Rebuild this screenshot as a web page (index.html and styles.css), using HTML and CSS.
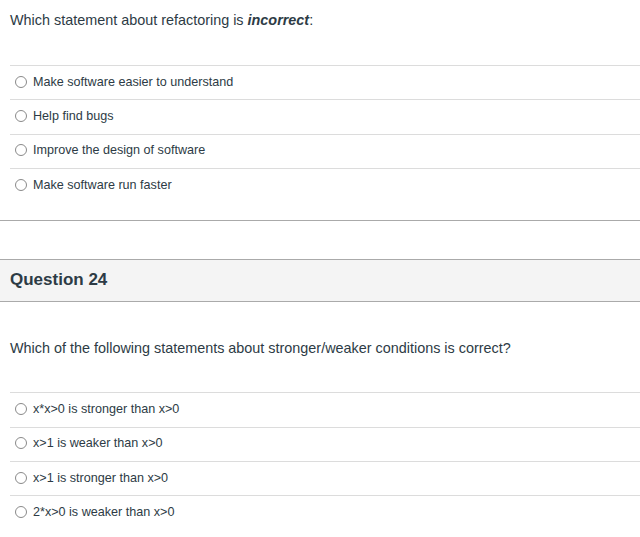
FILE: index.html
```html
<!DOCTYPE html>
<html>
<head>
<meta charset="utf-8">
<link rel="stylesheet" href="styles.css">
</head>
<body>
<div class="question">
  <div class="q-text">Which statement about refactoring is <b><i>incorrect</i></b>:</div>
  <div class="answers">
    <div class="answer"><span class="radio"></span><span>Make software easier to understand</span></div>
    <div class="answer"><span class="radio"></span><span>Help find bugs</span></div>
    <div class="answer"><span class="radio"></span><span>Improve the design of software</span></div>
    <div class="answer"><span class="radio"></span><span>Make software run faster</span></div>
  </div>
</div>
<div class="question q2">
  <div class="q-header">Question 24</div>
  <div class="q-text q-text2">Which of the following statements about stronger/weaker conditions is correct?</div>
  <div class="answers">
    <div class="answer"><span class="radio"></span><span>x*x&gt;0 is stronger than x&gt;0</span></div>
    <div class="answer"><span class="radio"></span><span>x&gt;1 is weaker than x&gt;0</span></div>
    <div class="answer"><span class="radio"></span><span>x&gt;1 is stronger than x&gt;0</span></div>
    <div class="answer"><span class="radio"></span><span>2*x&gt;0 is weaker than x&gt;0</span></div>
  </div>
</div>
</body>
</html>
```
FILE: styles.css
```css
html, body {
  margin: 0;
  padding: 0;
  background: #fff;
}
body {
  font-family: "Liberation Sans", Arial, sans-serif;
  color: #2d3b45;
  width: 640px;
  overflow: hidden;
}
.question {
  border-bottom: 1px solid #aaaaaa;
  padding-bottom: 18px;
}
.q-text {
  font-size: 14.4px;
  line-height: 20px;
  padding: 10px 0 0 10px;
  height: 65px;
  box-sizing: border-box;
}
.answers {
  margin-left: 10px;
}
.answer {
  display: flex;
  align-items: center;
  height: 34.33px;
  box-sizing: border-box;
  border-top: 1px solid #dcdcdc;
  font-size: 12.6px;
  padding-left: 5px;
  padding-bottom: 2px;
}
.radio {
  width: 12px;
  height: 12px;
  box-sizing: border-box;
  border: 1px solid #8a8a8a;
  border-radius: 50%;
  margin-right: 6px;
  flex: none;
}
.q2 {
  margin-top: 38px;
  border-bottom: none;
}
.q-header {
  background: #f4f4f4;
  border-top: 1px solid #aaaaaa;
  border-bottom: 1px solid #aaaaaa;
  height: 43px;
  box-sizing: border-box;
  display: flex;
  align-items: center;
  padding-left: 10px;
  font-weight: bold;
  font-size: 17px;
  padding-bottom: 1px;
}
.q-text2 {
  padding-top: 36px;
  height: 90px;
}
```
